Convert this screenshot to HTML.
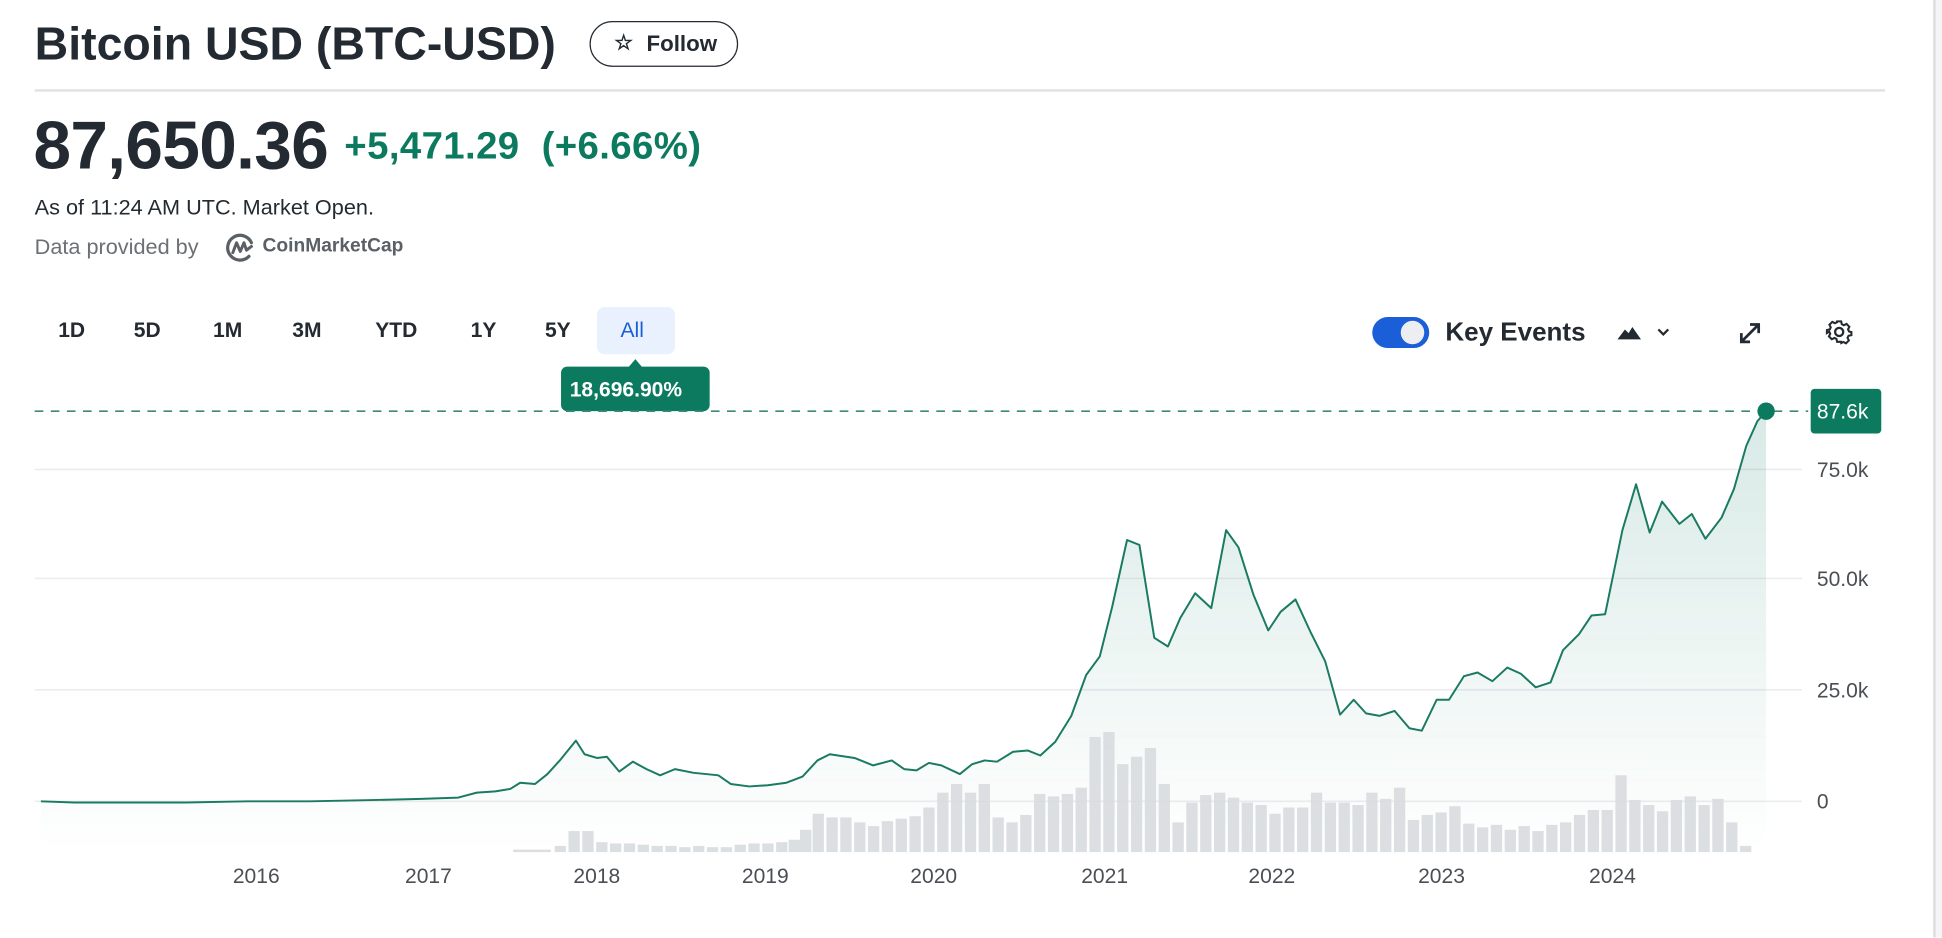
<!DOCTYPE html>
<html><head><meta charset="utf-8"><style>
html,body{margin:0;padding:0;background:#fff;overflow:hidden}
body{width:1942px;height:938px;position:relative;font-family:"Liberation Sans",Arial,sans-serif;color:#232a31}
#w{position:absolute;left:0;top:0;width:1568px;height:757px;transform:scale(1.2385);transform-origin:0 0}
.a{position:absolute;white-space:nowrap}
.rb{position:absolute;top:257px;font-size:17px;font-weight:bold;color:#232a31}
#side{position:absolute;left:1561px;top:0;width:2px;height:757px;background:#dcdcdf}
#side2{position:absolute;left:1563px;top:0;width:10px;height:757px;background:#f5f5f7}
</style></head><body><div id="w">
<div class="a" style="left:28px;top:14px;font-size:37.5px;font-weight:bold">Bitcoin USD (BTC-USD)</div>
<div class="a" style="left:476px;top:17px;width:118px;height:35px;border:1.5px solid #232a31;border-radius:19px"></div>
<div class="a" style="left:496px;top:25px;font-size:17px;font-weight:bold">☆</div>
<div class="a" style="left:522px;top:25px;font-size:18px;font-weight:bold">Follow</div>
<div class="a" style="left:28px;top:72px;width:1494px;height:2px;background:#e2e2e4"></div>
<div class="a" style="left:27px;top:86px;font-size:54.5px;font-weight:bold;letter-spacing:-0.5px">87,650.36</div>
<div class="a" style="left:278px;top:100px;font-size:31px;font-weight:bold;color:#0b7a5f;letter-spacing:0.3px">+5,471.29&nbsp; (+6.66%)</div>
<div class="a" style="left:28px;top:157px;font-size:17.5px">As of 11:24 AM UTC. Market Open.</div>
<div class="a" style="left:28px;top:189px;font-size:17.5px;color:#6b7075">Data provided by</div>
<svg class="a" style="left:181px;top:187px" width="26" height="26" viewBox="0 0 26 26"><path d="M20 20A10 10 0 1 1 22 9" fill="none" stroke="#5b6066" stroke-width="2.6" stroke-linecap="round"/><path d="M7 17L10 9L13 16L16 9L18 15L22 12" fill="none" stroke="#5b6066" stroke-width="2.4" stroke-linejoin="round" stroke-linecap="round"/></svg>
<div class="a" style="left:212px;top:190px;font-size:15.5px;font-weight:bold;color:#5b6066">CoinMarketCap</div>
<div class="rb" style="left:47px">1D</div><div class="rb" style="left:108px">5D</div><div class="rb" style="left:172px">1M</div><div class="rb" style="left:236px">3M</div><div class="rb" style="left:303px">YTD</div><div class="rb" style="left:380px">1Y</div><div class="rb" style="left:440px">5Y</div>
<div class="a" style="left:482px;top:248px;width:63px;height:38px;background:#e8f1fd;border-radius:6px"></div>
<div class="rb" style="left:501px;color:#1a5dd6;font-weight:normal">All</div>
<div class="a" style="left:507px;top:290px;width:0;height:0;border-left:6px solid transparent;border-right:6px solid transparent;border-bottom:7px solid #0b7a5f"></div>
<div class="a" style="left:453px;top:296px;width:120px;height:36px;background:#0b7a5f;border-radius:5px"></div>
<div class="a" style="left:460px;top:305px;font-size:17px;font-weight:bold;color:#fff">18,696.90%</div>
<div class="a" style="left:1108px;top:256px;width:46px;height:25px;background:#1a5fd8;border-radius:13px"></div>
<div class="a" style="left:1131px;top:259px;width:19px;height:19px;background:#eceef2;border-radius:50%"></div>
<div class="a" style="left:1167px;top:257px;font-size:21px;font-weight:bold">Key Events</div>
<svg class="a" style="left:1305px;top:260px" width="48" height="18" viewBox="0 0 48 18"><path d="M1 14L7 6L10 9L13 4L20 14Z" fill="#232a31"/><path d="M34 6L38 10L42 6" fill="none" stroke="#232a31" stroke-width="1.8"/></svg>
<svg class="a" style="left:1402px;top:258px" width="22" height="22" viewBox="0 0 22 22"><path d="M4 18L18 4M11 4H18V11M4 11V18H11" fill="none" stroke="#232a31" stroke-width="2.2"/></svg>
<svg class="a" style="left:1474px;top:257px" width="22" height="22" viewBox="0 0 24 24"><path d="M10 2h4l.6 2.8 2 1 2.6-1.3 2.8 2.8-1.3 2.6 1 2L24 12.5v3l-2.8.6-1 2 1.3 2.6-2.8 2.8-2.6-1.3-2 1L14 22h-4l-.6-2.8-2-1-2.6 1.3-2.8-2.8 1.3-2.6-1-2L0 13.5v-3l2.8-.6 1-2L2.5 5.3l2.8-2.8 2.6 1.3 2-1Z" transform="scale(.9) translate(1.3 1)" fill="none" stroke="#232a31" stroke-width="2"/><circle cx="12" cy="12" r="3.6" fill="none" stroke="#232a31" stroke-width="2"/></svg>
<svg class="a" style="left:0;top:0" width="1568" height="757" viewBox="0 0 1568 757">
<defs><linearGradient id="g" x1="0" y1="0" x2="0" y2="1"><stop offset="0" stop-color="#0b7a5f" stop-opacity="0.16"/><stop offset="1" stop-color="#0b7a5f" stop-opacity="0.0"/></linearGradient></defs>
<g stroke="#ececee" stroke-width="1.3"><line x1="28" y1="379" x2="1455" y2="379"/><line x1="28" y1="467" x2="1455" y2="467"/><line x1="28" y1="557" x2="1455" y2="557"/><line x1="28" y1="647" x2="1455" y2="647"/></g>
<path d="M33,647 L60,648 L100,648 L150,648 L200,647 L250,647 L300,646 L340,645 L370,644 L385,640 L400,639 L412,637 L420,632 L432,633 L442,625 L452,614 L465,598 L472,609 L482,612 L490,611 L500,623 L511,615 L522,621 L533,626 L545,621 L560,624 L580,626 L590,633 L605,635 L620,634 L635,632 L648,627 L660,614 L670,609 L690,612 L705,618 L720,614 L730,621 L740,622 L750,616 L760,618 L775,625 L785,617 L795,614 L805,615 L818,607 L830,606 L840,610 L852,599 L865,578 L877,545 L888,530 L898,490 L910,436 L920,440 L932,515 L943,522 L953,499 L965,479 L978,491 L990,428 L1000,442 L1012,480 L1024,509 L1034,494 L1046,484 L1058,510 L1070,534 L1082,577 L1093,565 L1103,576 L1114,578 L1126,574 L1138,588 L1148,590 L1160,565 L1170,565 L1182,546 L1193,543 L1205,550 L1217,539 L1228,544 L1240,555 L1252,551 L1262,525 L1275,512 L1285,497 L1296,496 L1310,428 L1321,391 L1332,430 L1342,405 L1356,423 L1366,415 L1377,435 L1390,418 L1400,395 L1410,360 L1419,340 L1426,332 L1426,688 L33,688 Z" fill="url(#g)"/>
<g fill="#d9dcdf" opacity="0.9" transform="translate(459 0) scale(1.016 1) translate(-459 0)">
<rect x="415" y="686" width="30" height="2"/><rect x="448" y="683" width="9" height="5"/><rect x="459" y="671" width="9" height="17"/><rect x="470" y="671" width="9" height="17"/><rect x="481" y="680" width="9" height="8"/><rect x="492" y="681" width="9" height="7"/><rect x="503" y="681" width="9" height="7"/><rect x="514" y="682" width="9" height="6"/><rect x="525" y="683" width="9" height="5"/><rect x="536" y="683" width="9" height="5"/><rect x="547" y="684" width="9" height="4"/><rect x="558" y="683" width="9" height="5"/><rect x="569" y="684" width="9" height="4"/><rect x="580" y="684" width="9" height="4"/><rect x="591" y="682" width="9" height="6"/><rect x="602" y="681" width="9" height="7"/><rect x="613" y="681" width="9" height="7"/><rect x="624" y="680" width="9" height="8"/><rect x="634" y="678" width="9" height="10"/><rect x="643" y="670" width="9" height="18"/><rect x="653" y="657" width="9" height="31"/><rect x="664" y="660" width="9" height="28"/><rect x="675" y="660" width="9" height="28"/><rect x="686" y="664" width="9" height="24"/><rect x="697" y="667" width="9" height="21"/><rect x="708" y="663" width="9" height="25"/><rect x="719" y="661" width="9" height="27"/><rect x="730" y="659" width="9" height="29"/><rect x="741" y="652" width="9" height="36"/><rect x="752" y="640" width="9" height="48"/><rect x="763" y="633" width="9" height="55"/><rect x="774" y="640" width="9" height="48"/><rect x="785" y="633" width="9" height="55"/><rect x="796" y="660" width="9" height="28"/><rect x="807" y="664" width="9" height="24"/><rect x="818" y="658" width="9" height="30"/><rect x="829" y="641" width="9" height="47"/><rect x="840" y="643" width="9" height="45"/><rect x="851" y="641" width="9" height="47"/><rect x="862" y="636" width="9" height="52"/><rect x="873" y="595" width="9" height="93"/><rect x="884" y="591" width="9" height="97"/><rect x="895" y="617" width="9" height="71"/><rect x="906" y="611" width="9" height="77"/><rect x="917" y="604" width="9" height="84"/><rect x="928" y="633" width="9" height="55"/><rect x="939" y="664" width="9" height="24"/><rect x="950" y="648" width="9" height="40"/><rect x="961" y="642" width="9" height="46"/><rect x="972" y="640" width="9" height="48"/><rect x="983" y="644" width="9" height="44"/><rect x="994" y="648" width="9" height="40"/><rect x="1005" y="650" width="9" height="38"/><rect x="1016" y="657" width="9" height="31"/><rect x="1027" y="652" width="9" height="36"/><rect x="1038" y="652" width="9" height="36"/><rect x="1049" y="640" width="9" height="48"/><rect x="1060" y="648" width="9" height="40"/><rect x="1071" y="648" width="9" height="40"/><rect x="1082" y="650" width="9" height="38"/><rect x="1093" y="640" width="9" height="48"/><rect x="1104" y="645" width="9" height="43"/><rect x="1115" y="636" width="9" height="52"/><rect x="1126" y="662" width="9" height="26"/><rect x="1137" y="658" width="9" height="30"/><rect x="1148" y="656" width="9" height="32"/><rect x="1159" y="651" width="9" height="37"/><rect x="1170" y="665" width="9" height="23"/><rect x="1181" y="668" width="9" height="20"/><rect x="1192" y="666" width="9" height="22"/><rect x="1203" y="670" width="9" height="18"/><rect x="1214" y="667" width="9" height="21"/><rect x="1225" y="671" width="9" height="17"/><rect x="1236" y="666" width="9" height="22"/><rect x="1247" y="664" width="9" height="24"/><rect x="1258" y="658" width="9" height="30"/><rect x="1269" y="654" width="9" height="34"/><rect x="1280" y="654" width="9" height="34"/><rect x="1291" y="626" width="9" height="62"/><rect x="1302" y="646" width="9" height="42"/><rect x="1313" y="650" width="9" height="38"/><rect x="1324" y="655" width="9" height="33"/><rect x="1335" y="646" width="9" height="42"/><rect x="1346" y="643" width="9" height="45"/><rect x="1357" y="650" width="9" height="38"/><rect x="1368" y="645" width="9" height="43"/><rect x="1379" y="664" width="9" height="24"/><rect x="1390" y="683" width="9" height="5"/>
</g>
<polyline points="33,647 60,648 100,648 150,648 200,647 250,647 300,646 340,645 370,644 385,640 400,639 412,637 420,632 432,633 442,625 452,614 465,598 472,609 482,612 490,611 500,623 511,615 522,621 533,626 545,621 560,624 580,626 590,633 605,635 620,634 635,632 648,627 660,614 670,609 690,612 705,618 720,614 730,621 740,622 750,616 760,618 775,625 785,617 795,614 805,615 818,607 830,606 840,610 852,599 865,578 877,545 888,530 898,490 910,436 920,440 932,515 943,522 953,499 965,479 978,491 990,428 1000,442 1012,480 1024,509 1034,494 1046,484 1058,510 1070,534 1082,577 1093,565 1103,576 1114,578 1126,574 1138,588 1148,590 1160,565 1170,565 1182,546 1193,543 1205,550 1217,539 1228,544 1240,555 1252,551 1262,525 1275,512 1285,497 1296,496 1310,428 1321,391 1332,430 1342,405 1356,423 1366,415 1377,435 1390,418 1400,395 1410,360 1419,340 1426,332" fill="none" stroke="#1a7a62" stroke-width="1.6" stroke-linejoin="round"/>
<line x1="28" y1="332" x2="1460" y2="332" stroke="#3d8a74" stroke-width="1.3" stroke-dasharray="7 6"/>
<circle cx="1426" cy="332" r="7" fill="#0b7a5f"/>
<rect x="1462" y="314" width="57" height="36" rx="3" fill="#0b7a5f"/>
<text x="1467" y="338" font-size="17" fill="#fff" font-family="Liberation Sans">87.6k</text>
<g font-size="17" fill="#4b4f55" font-family="Liberation Sans"><text x="1467" y="385">75.0k</text><text x="1467" y="473">50.0k</text><text x="1467" y="563">25.0k</text><text x="1467" y="653">0</text>
<text x="188" y="713">2016</text><text x="327" y="713">2017</text><text x="463" y="713">2018</text><text x="599" y="713">2019</text><text x="735" y="713">2020</text><text x="873" y="713">2021</text><text x="1008" y="713">2022</text><text x="1145" y="713">2023</text><text x="1283" y="713">2024</text></g>
</svg>
<div id="side"></div><div id="side2"></div>
</div></body></html>
